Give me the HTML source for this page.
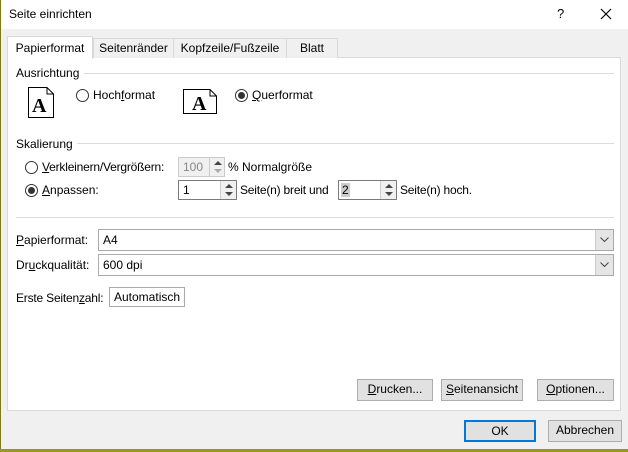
<!DOCTYPE html>
<html><head><style>
*{box-sizing:border-box;margin:0;padding:0}
body{width:628px;height:452px;overflow:hidden;background:#f0f0f0;font-family:"Liberation Sans",sans-serif;font-size:12px;color:#000;position:relative}
.a{position:absolute;white-space:nowrap}
u{text-decoration:underline}
.line{position:absolute;height:1px;background:#dcdcdc}
.radio{position:absolute;width:13px;height:13px;border:1px solid #333;border-radius:50%;background:#fff}
.radio.on::after{content:"";position:absolute;left:2px;top:2px;width:7px;height:7px;border-radius:50%;background:#333}
.box{position:absolute;border:1px solid #7a7a7a;background:#fff}
.spin{position:absolute;right:0;top:0;bottom:0;width:16px;border-left:1px solid #ccc;background:#f0f0f0}
.spin i{position:absolute;left:4px;width:0;height:0;border-left:4px solid transparent;border-right:4px solid transparent}
.btn{position:absolute;border:1px solid #adadad;background:#e1e1e1;text-align:center;line-height:19px}
.tab{position:absolute;top:38px;height:20px;border:1px solid #d9d9d9;border-bottom:none;background:#f0f0f0;text-align:center;line-height:18px}
.n{letter-spacing:-0.2px}
</style></head><body>
<div class="a" style="left:0;top:0;width:1px;height:452px;background:#7d7a1e"></div>
<div class="a" style="left:0;top:449px;width:628px;height:3px;background:#9a9620"></div>
<div class="a" style="left:1px;top:0;width:627px;height:29px;background:#fff"></div>
<div class="a" style="left:9px;top:7px;font-size:12px">Seite einrichten</div>
<div class="a" style="left:557px;top:6px;font-size:13px">?</div>
<svg class="a" style="left:600px;top:8px" width="12" height="12"><path d="M1 1L11 11M11 1L1 11" stroke="#000" stroke-width="1.2"/></svg>
<div class="a" style="left:7px;top:57px;width:614px;height:354px;background:#fff;border:1px solid #d9d9d9"></div>
<div class="tab" style="left:93px;width:81px">Seitenränder</div>
<div class="tab" style="left:173px;width:114px">Kopfzeile/Fußzeile</div>
<div class="tab" style="left:286px;width:52px">Blatt</div>
<div class="tab" style="left:7px;top:36px;width:86px;height:23px;background:#fff;line-height:22px">Papierformat</div>

<div class="a" style="left:16px;top:66px">Ausrichtung</div>
<div class="line" style="left:84px;top:73px;width:530px"></div>
<svg class="a" style="left:28px;top:87px" width="26" height="31"><path d="M0.5 0.5H19L25.5 7V30.5H0.5Z M19 0.5V7H25.5" fill="#fff" stroke="#000"/><text x="4" y="25" font-family="Liberation Serif" font-weight="bold" font-size="20">A</text></svg>
<div class="radio" style="left:76px;top:89px"></div>
<div class="a" style="left:93px;top:88px">Hoch<u>f</u>ormat</div>
<svg class="a" style="left:183px;top:89px" width="34" height="25"><path d="M0.5 0.5H27L33.5 7V24.5H0.5Z M27 0.5V7H33.5" fill="#fff" stroke="#000"/><text x="9" y="21" font-family="Liberation Serif" font-weight="bold" font-size="20">A</text></svg>
<div class="radio on" style="left:235px;top:89px"></div>
<div class="a" style="left:252px;top:88px"><u>Q</u>uerformat</div>

<div class="a" style="left:16px;top:137px">Skalierung</div>
<div class="line" style="left:77px;top:143px;width:537px"></div>
<div class="radio" style="left:25px;top:161px"></div>
<div class="a n" style="left:42px;top:160px"><u>V</u>erkleinern/Vergrößern:</div>
<div class="box" style="left:178px;top:157px;width:47px;height:20px;border-color:#ccc;background:#f0f0f0"><span class="a" style="left:4px;top:2px;color:#888">100</span><div class="spin" style="width:15px"><i style="top:3px;border-bottom:4px solid #444"></i><i style="top:11px;border-top:4px solid #aaa"></i></div></div>
<div class="a" style="left:228px;top:160px">% Normalgröße</div>
<div class="radio on" style="left:25px;top:184px"></div>
<div class="a" style="left:42px;top:183px"><u>A</u>npassen:</div>
<div class="box" style="left:178px;top:180px;width:59px;height:20px"><span class="a" style="left:4px;top:2px">1</span><div class="spin"><i style="top:3px;border-bottom:4px solid #444"></i><i style="top:11px;border-top:4px solid #444"></i></div></div>
<div class="a n" style="left:240px;top:183px">Seite(n) breit und</div>
<div class="box" style="left:338px;top:180px;width:59px;height:20px"><span class="a" style="left:2px;top:2px;background:#ccc;padding:0 1px">2</span><div class="spin"><i style="top:3px;border-bottom:4px solid #444"></i><i style="top:11px;border-top:4px solid #444"></i></div></div>
<div class="a n" style="left:400px;top:183px">Seite(n) hoch.</div>
<div class="line" style="left:16px;top:217px;width:598px"></div>

<div class="a" style="left:16px;top:233px"><u>P</u>apierformat:</div>
<div class="box" style="left:98px;top:229px;width:516px;height:22px;border-color:#aaa"><span class="a" style="left:4px;top:3px">A4</span><div class="spin" style="width:18px;background:#e5e5e5"><svg class="a" style="left:4px;top:7px" width="9" height="6"><path d="M0.5 0.5L4.5 4.5L8.5 0.5" stroke="#444" fill="none"/></svg></div></div>
<div class="a" style="left:16px;top:258px">Dr<u>u</u>ckqualität:</div>
<div class="box" style="left:98px;top:254px;width:516px;height:22px;border-color:#aaa"><span class="a" style="left:4px;top:3px">600 dpi</span><div class="spin" style="width:18px;background:#e5e5e5"><svg class="a" style="left:4px;top:7px" width="9" height="6"><path d="M0.5 0.5L4.5 4.5L8.5 0.5" stroke="#444" fill="none"/></svg></div></div>
<div class="a n" style="left:16px;top:291px">Erste Seiten<u>z</u>ahl:</div>
<div class="box" style="left:109px;top:287px;width:76px;height:20px;border-color:#aaa"><span class="a" style="left:4px;top:2px">Automatisch</span></div>

<div class="btn" style="left:357px;top:379px;width:76px;height:22px"><u>D</u>rucken...</div>
<div class="btn" style="left:441px;top:379px;width:82px;height:22px"><u>S</u>eitenansicht</div>
<div class="btn" style="left:537px;top:379px;width:77px;height:22px"><u>O</u>ptionen...</div>
<div class="btn" style="left:464px;top:420px;width:72px;height:22px;border:2px solid #0078d7;line-height:18px">OK</div>
<div class="btn" style="left:548px;top:420px;width:74px;height:22px">Abbrechen</div>
</body></html>
